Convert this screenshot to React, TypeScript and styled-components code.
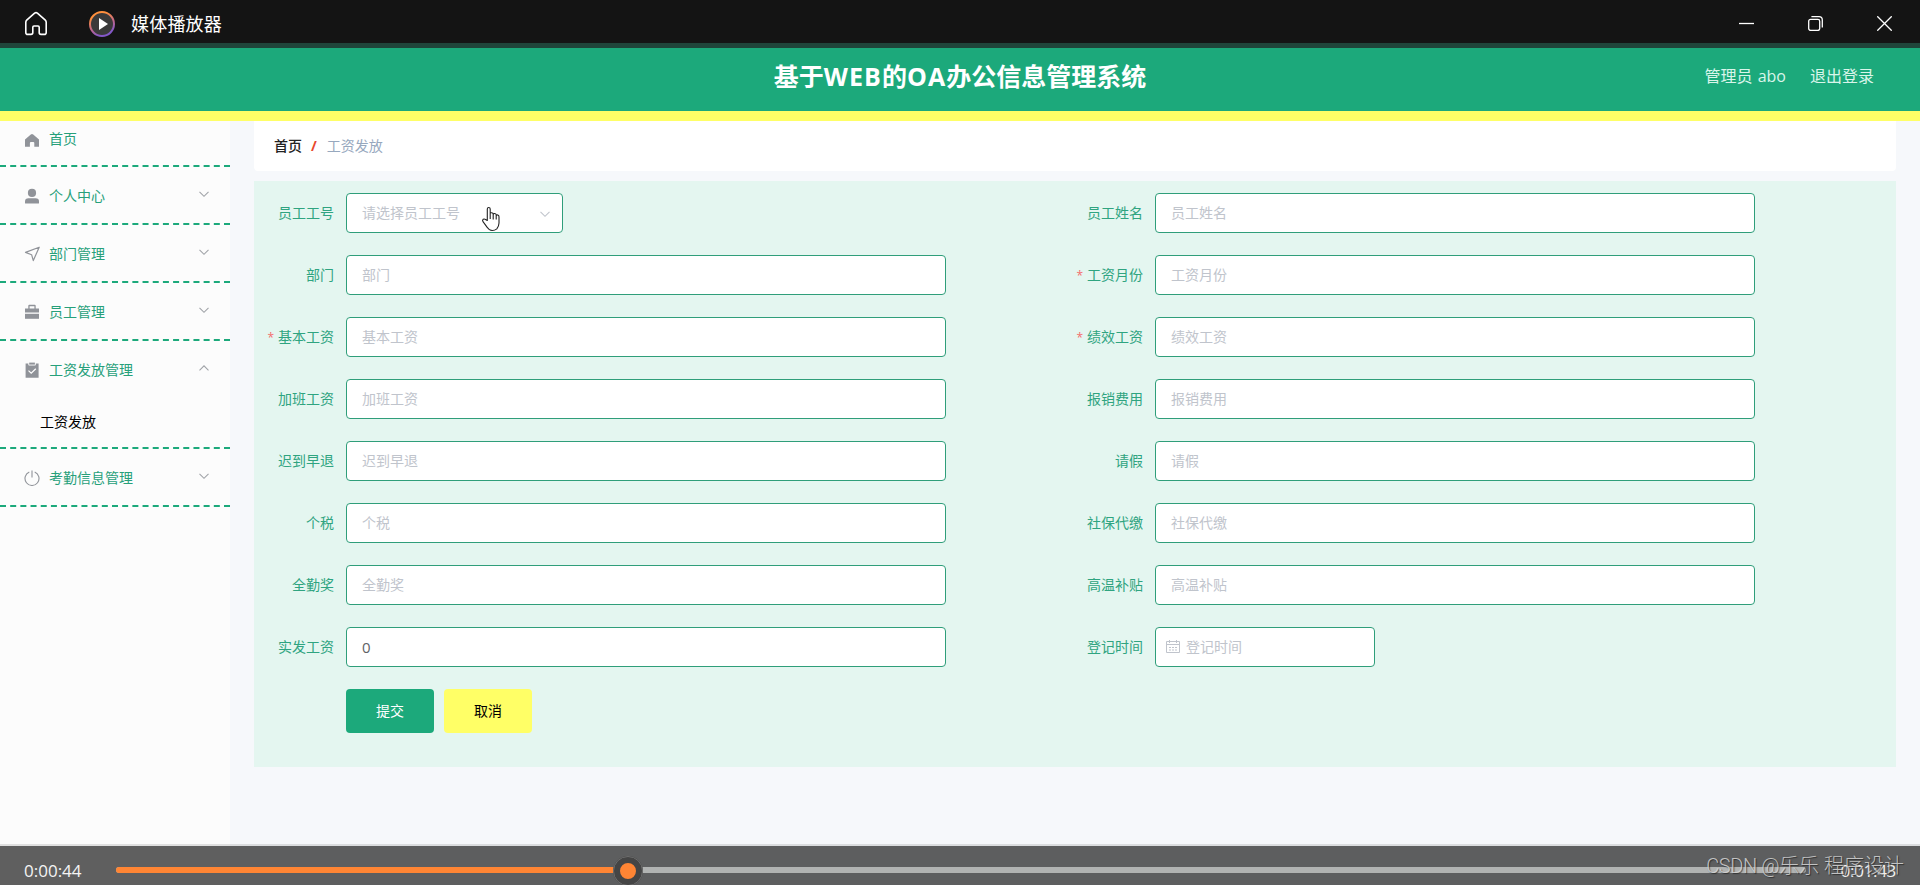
import React from 'react';
import styled, { createGlobalStyle } from 'styled-components';

const GREEN = '#1ca97b';
const YELLOW = '#ffff66';

const GlobalStyle = createGlobalStyle`
  * { box-sizing: border-box; }
  body {
    margin: 0;
    overflow: hidden;
    font-family: 'Open Sans', 'Noto Sans CJK SC', sans-serif;
    font-size: 14px;
    color: #303133;
  }
`;

const Window = styled.div`
  position: relative;
  display: flex;
  flex-direction: column;
  height: 885px;
  overflow: hidden;
  background: #f6f8fb;
`;

const TitleBar = styled.div`
  display: flex;
  align-items: flex-start;
  height: 48px;
  flex: none;
  padding: 11px 28px 0 24px;
  background: #141414;
  border-bottom: 5px solid #1f453a;
  color: #fff;
`;

const PlayerLogo = styled.svg`
  margin-left: 41px;
`;

const PlayerName = styled.span`
  margin-left: 16px;
  font-size: 18px;
  line-height: 26px;
  letter-spacing: 0.2px;
`;

const WindowButtons = styled.div`
  display: flex;
  gap: 54px;
  margin: 5px 0 0 auto;
`;

const Header = styled.header`
  display: grid;
  grid-template-columns: 1fr auto 1fr;
  align-items: start;
  height: 73px;
  flex: none;
  background: ${GREEN};
  border-bottom: 10px solid ${YELLOW};
  color: #fff;
`;

const SystemTitle = styled.h1`
  grid-column: 2;
  margin: 10px 0 0;
  font-size: 25px;
  line-height: 36px;
  font-weight: 700;
  white-space: nowrap;
`;

const TitleLatin = styled.span`
  letter-spacing: 1.1px;
`;

const UserLinks = styled.div`
  display: flex;
  justify-content: flex-end;
  gap: 24px;
  padding: 16px 46px 0 0;
  font-size: 16px;
  line-height: 24px;
  word-spacing: 1px;
  color: #d9f5ea;
`;

const Body = styled.div`
  display: flex;
  flex: 1;
  min-height: 0;
`;

const Sidebar = styled.nav`
  width: 230px;
  flex: none;
  background: #fcfcfc;
`;

const MenuGroup = styled.div`
  border-bottom: 2px dashed ${GREEN};
`;

const MenuItem = styled.div<{ $first?: boolean }>`
  display: flex;
  align-items: center;
  height: ${(p) => (p.$first ? 44 : 56)}px;
  padding: ${(p) => (p.$first ? '0 20px 6px 24px' : '2px 20px 0 24px')};
  color: #27a07a;
`;

const MenuLabel = styled.span<{ $first?: boolean }>`
  flex: 1;
  margin-left: 9px;
  padding-bottom: ${(p) => (p.$first ? 2 : 0)}px;
  line-height: 20px;
`;

const SubItem = styled.div`
  height: 50px;
  padding-left: 40px;
  line-height: 50px;
  color: #000;
`;

const Content = styled.main`
  flex: 1;
  padding: 0 24px;
`;

const Breadcrumb = styled.div`
  display: flex;
  height: 50px;
  padding: 0 20px;
  line-height: 49px;
  background: #fff;
  border-radius: 0 0 4px 4px;
`;

const CrumbHome = styled.span`
  font-weight: 500;
  color: #222;
`;

const CrumbSeparator = styled.span`
  margin: 0 10px 0 9px;
  font-weight: 700;
  color: #e8482c;
`;

const CrumbCurrent = styled.span`
  color: #97a8be;
`;

const Form = styled.form`
  display: grid;
  grid-template-columns: 1fr 1fr;
  row-gap: 22px;
  margin-top: 10px;
  height: 586px;
  padding: 12px;
  align-content: start;
  background: #e4f6f0;
`;

const Field = styled.div`
  display: flex;
  height: 40px;
`;

const FieldLabel = styled.label`
  width: 80px;
  padding-right: 12px;
  text-align: right;
  line-height: 39px;
  white-space: nowrap;
  color: #2fa480;
`;

const Required = styled.span`
  margin-right: 4px;
  font-size: 12px;
  color: #f56c6c;
`;

const Control = styled.div<{ $width: number; $filled?: boolean; $icon?: boolean }>`
  display: flex;
  align-items: center;
  gap: 6px;
  width: ${(p) => p.$width}px;
  height: 40px;
  padding: 0 ${(p) => (p.$icon ? 10 : 11)}px 0 ${(p) => (p.$icon ? 10 : 15)}px;
  border: 1px solid #2f9e7a;
  border-radius: 4px;
  background: #fff;
  font-size: ${(p) => (p.$filled ? 15 : 14)}px;
  line-height: 38px;
  color: ${(p) => (p.$filled ? '#606266' : '#c0c4cc')};
`;

const ControlText = styled.span`
  flex: 1;
`;

const Actions = styled.div`
  display: flex;
  gap: 10px;
  padding-left: 80px;
`;

const ActionButton = styled.button<{ $primary?: boolean }>`
  width: 88px;
  height: 44px;
  padding: 0;
  border: 0;
  border-radius: 4px;
  font: inherit;
  line-height: 44px;
  background: ${(p) => (p.$primary ? GREEN : YELLOW)};
  color: ${(p) => (p.$primary ? '#fff' : '#000')};
`;

const Pointer = styled.svg`
  position: absolute;
  left: 481px;
  top: 206px;
`;

const PlayerBar = styled.div`
  position: absolute;
  left: 0;
  right: 0;
  bottom: 0;
  display: flex;
  align-items: center;
  height: 41px;
  padding: 10px 24px 0;
  border-top: 2px solid rgba(80, 80, 80, 0.16);
  background: rgba(28, 28, 28, 0.7);
  background-clip: padding-box;
  color: #f4f4f4;
  font-size: 17px;
`;

const Elapsed = styled.span`
  width: 92px;
  line-height: 24px;
`;

const Track = styled.div`
  display: flex;
  align-items: center;
  width: 1690px;
  height: 6px;
  margin-top: -1px;
  border-radius: 3px;
  background: #b1b3b2;
`;

const Played = styled.div`
  width: 498px;
  height: 6px;
  border-radius: 3px 0 0 3px;
  background: #ff8534;
`;

const Thumb = styled.div`
  width: 30px;
  height: 30px;
  flex: none;
  margin: 1px 0 0 -1px;
  border: 7px solid #454545;
  border-radius: 50%;
  outline: 1px solid #6e6e6e;
  outline-offset: -1px;
  background: #ff8534;
`;

const Remaining = styled.span`
  margin-left: 35px;
  line-height: 24px;
  letter-spacing: -0.3px;
`;

const Watermark = styled.div`
  position: absolute;
  right: 16px;
  bottom: 4px;
  display: flex;
  font-family: Roboto, 'Noto Sans CJK SC', sans-serif;
  font-weight: 300;
  font-size: 20px;
  line-height: 30px;
  white-space: pre;
  color: rgba(215, 215, 215, 0.85);
  text-shadow: 1px 1px 1px rgba(30, 30, 30, 0.7);
`;

const WatermarkLatin = styled.span`
  letter-spacing: -0.4px;
`;

type IconName = 'home' | 'user' | 'send' | 'case' | 'claim' | 'power';

function MenuIcon({ name }: { name: IconName }) {
  const shapes: Record<IconName, React.ReactNode> = {
    home: <path d="M8 2 Q8.6 2 9.2 2.5 L15 7.4 V14.7 H10.3 V11 Q10.3 10 9.3 10 H6.9 Q5.9 10 5.9 11 V14.7 H1 V7.4 L6.8 2.5 Q7.4 2 8 2Z" />,
    user: (
      <>
        <circle cx="8" cy="4.9" r="4.1" />
        <path d="M1 15 V13.6 Q1 10.3 4.5 10.3 H11.5 Q15 10.3 15 13.6 V15 Q15 15.6 14.3 15.6 H1.7 Q1 15.6 1 15Z" />
      </>
    ),
    send: <path d="M15.2 1.2 L1.5 6.4 L7.6 8.7 L9.3 14.6 Z" fill="none" stroke="#909399" strokeWidth="1.2" strokeLinejoin="round" />,
    case: (
      <>
        <path d="M4.3 4.6 V1.8 Q4.3 .8 5.3 .8 H10.7 Q11.7 .8 11.7 1.8 V4.6 H15 V8.6 H1 V4.6Z M5.6 2.2 V4.6 H10.4 V2.2Z" fillRule="evenodd" />
        <path d="M1 9.8 H15 V14.8 H1Z" />
      </>
    ),
    claim: (
      <>
        <path d="M1.6 1.6 H4.3 V2.8 Q4.3 3.6 5.1 3.6 H11 Q11.8 3.6 11.8 2.8 V1.6 H14.6 V15.7 H1.6Z" />
        <path d="M5.2 .6 H10.9 V2.6 H5.2Z" />
        <path d="M4.5 8.6 L7.2 11.2 L11.8 6.8" fill="none" stroke="#fff" strokeWidth="1.2" />
      </>
    ),
    power: <path d="M5.3 2 A7 7 0 1 0 10.7 2 M8 .4 V7.6" fill="none" stroke="#909399" strokeWidth="1.1" />,
  };
  return (
    <svg width="16" height="16" viewBox="0 0 16 16" fill="#909399">
      {shapes[name]}
    </svg>
  );
}

const ArrowSvg = styled.svg<{ $raised?: boolean }>`
  margin-top: ${(p) => (p.$raised ? -5 : 1)}px;
`;

function Arrow({ up, raised, color = '#a0a3a8' }: { up?: boolean; raised?: boolean; color?: string }) {
  return (
    <ArrowSvg $raised={raised} width="12" height="12" viewBox="0 0 12 12" fill="none" stroke={color} strokeWidth="1.1">
      <path d={up ? 'M1.5 8.3 L6 3.8 L10.5 8.3' : 'M1.5 3.8 L6 8.3 L10.5 3.8'} />
    </ArrowSvg>
  );
}

function CalendarIcon() {
  return (
    <svg width="14" height="14" viewBox="0 0 14 14" fill="none" stroke="#c0c4cc">
      <path d="M.5 1.5 H13.5 V12.5 H.5Z M.5 4.5 H13.5 M3.5 0 V3 M10.5 0 V3" />
      <path d="M3 7.5 H5 M6 7.5 H8 M9 7.5 H11 M3 10 H5 M6 10 H8 M9 10 H11" />
    </svg>
  );
}

const menu: { icon: IconName; label: string; children?: string[] }[] = [
  { icon: 'home', label: '首页' },
  { icon: 'user', label: '个人中心' },
  { icon: 'send', label: '部门管理' },
  { icon: 'case', label: '员工管理' },
  { icon: 'claim', label: '工资发放管理', children: ['工资发放'] },
  { icon: 'power', label: '考勤信息管理' },
];

type FieldSpec = {
  label: string;
  text?: string;
  required?: boolean;
  kind?: 'select' | 'date' | 'value';
};

const fields: FieldSpec[] = [
  { label: '员工工号', text: '请选择员工工号', kind: 'select' },
  { label: '员工姓名' },
  { label: '部门' },
  { label: '工资月份', required: true },
  { label: '基本工资', required: true },
  { label: '绩效工资', required: true },
  { label: '加班工资' },
  { label: '报销费用' },
  { label: '迟到早退' },
  { label: '请假' },
  { label: '个税' },
  { label: '社保代缴' },
  { label: '全勤奖' },
  { label: '高温补贴' },
  { label: '实发工资', text: '0', kind: 'value' },
  { label: '登记时间', kind: 'date' },
];

function FormField({ label, text, required, kind }: FieldSpec) {
  const width = kind === 'select' ? 217 : kind === 'date' ? 220 : 600;
  return (
    <Field>
      <FieldLabel>
        {required && <Required>*</Required>}
        {label}
      </FieldLabel>
      <Control $width={width} $filled={kind === 'value'} $icon={kind === 'date'}>
        {kind === 'date' && <CalendarIcon />}
        <ControlText>{text ?? label}</ControlText>
        {kind === 'select' && <Arrow color="#c0c4cc" />}
      </Control>
    </Field>
  );
}

export default function App() {
  return (
    <Window>
      <GlobalStyle />
      <TitleBar>
        <svg width="24" height="25" viewBox="0 0 24 25" fill="none" stroke="#fff" strokeWidth="1.6" strokeLinejoin="round">
          <path d="M1.8 11.2 Q1.8 10 2.7 9.2 L10.6 2.2 Q12 1.1 13.4 2.2 L21.3 9.2 Q22.2 10 22.2 11.2 V21.4 Q22.2 23.4 20.2 23.4 H17 Q15.2 23.4 15.2 21.6 V16.2 Q15.2 15 14 15 H10 Q8.8 15 8.8 16.2 V21.6 Q8.8 23.4 7 23.4 H3.8 Q1.8 23.4 1.8 21.4Z" />
        </svg>
        <PlayerLogo width="26" height="26" viewBox="0 0 26 26">
          <defs>
            <linearGradient id="ring" x1="0" y1="0" x2=".4" y2="1">
              <stop offset="0.25" stopColor="#ff8f3c" />
              <stop offset="0.65" stopColor="#c0688c" />
              <stop offset="1" stopColor="#8358c8" />
            </linearGradient>
          </defs>
          <circle cx="13" cy="13" r="12" fill="#3a3a3a" stroke="url(#ring)" strokeWidth="2" />
          <path d="M10 7 L19 13 L10 19Z" fill="#fff" />
        </PlayerLogo>
        <PlayerName>媒体播放器</PlayerName>
        <WindowButtons>
          <svg width="15" height="15" stroke="#fff" strokeWidth="1.3">
            <path d="M0 7.5 H15" />
          </svg>
          <svg width="15" height="15" fill="none" stroke="#fff" strokeWidth="1.3">
            <rect x=".7" y="3.4" width="11" height="11" rx="1.8" />
            <path d="M3.4 .7 H11 Q14.3 .7 14.3 4 V11.6" />
          </svg>
          <svg width="15" height="15" stroke="#fff" strokeWidth="1.3">
            <path d="M.3 .3 L14.7 14.7 M14.7 .3 L.3 14.7" />
          </svg>
        </WindowButtons>
      </TitleBar>

      <Header>
        <SystemTitle>
          基于<TitleLatin>WEB</TitleLatin>的<TitleLatin>OA</TitleLatin>办公信息管理系统
        </SystemTitle>
        <UserLinks>
          <span>管理员 abo</span>
          <span>退出登录</span>
        </UserLinks>
      </Header>

      <Body>
        <Sidebar>
          {menu.map((item, i) => (
            <MenuGroup key={item.label}>
              <MenuItem $first={i === 0}>
                <MenuIcon name={item.icon} />
                <MenuLabel $first={i === 0}>{item.label}</MenuLabel>
                {i > 0 && <Arrow up={!!item.children} raised />}
              </MenuItem>
              {item.children?.map((child) => (
                <SubItem key={child}>{child}</SubItem>
              ))}
            </MenuGroup>
          ))}
        </Sidebar>
        <Content>
          <Breadcrumb>
            <CrumbHome>首页</CrumbHome>
            <CrumbSeparator>/</CrumbSeparator>
            <CrumbCurrent>工资发放</CrumbCurrent>
          </Breadcrumb>
          <Form>
            {fields.map((field) => (
              <FormField key={field.label} {...field} />
            ))}
            <Actions>
              <ActionButton type="button" $primary>提交</ActionButton>
              <ActionButton type="button">取消</ActionButton>
            </Actions>
          </Form>
        </Content>
      </Body>

      <Pointer width="20" height="26" viewBox="0 0 20 26">
        <path
          d="M6.3 14.5 V3 Q6.3 1.5 7.7 1.5 Q9.2 1.5 9.2 3 V9.4 V7.6 Q9.2 6.6 10.6 6.7 Q12.2 6.8 12.2 8.2 V10 V8.3 Q12.4 7.3 13.8 7.5 Q15.2 7.7 15.2 9 V10.6 V9.6 Q15.6 8.7 16.8 9 Q18 9.4 18 10.8 V17 Q18 20 15.8 22.8 Q13.8 24.5 11.2 24.5 Q8 24.4 6.4 21.6 L2 15.7 Q1 14.2 2.2 13.3 Q3.3 12.7 4.5 13.4 Z M9.2 9 V13 M12.2 9.6 V13.4 M15.2 10.2 V13.6"
          fill="#fff"
          stroke="#222"
          strokeWidth="1.1"
          strokeLinejoin="round"
        />
      </Pointer>

      <PlayerBar>
        <Elapsed>0:00:44</Elapsed>
        <Track>
          <Played />
          <Thumb />
        </Track>
        <Remaining>0:01:43</Remaining>
      </PlayerBar>
      <Watermark>
        <WatermarkLatin>CSDN @</WatermarkLatin>乐乐 程序设计
      </Watermark>
    </Window>
  );
}
